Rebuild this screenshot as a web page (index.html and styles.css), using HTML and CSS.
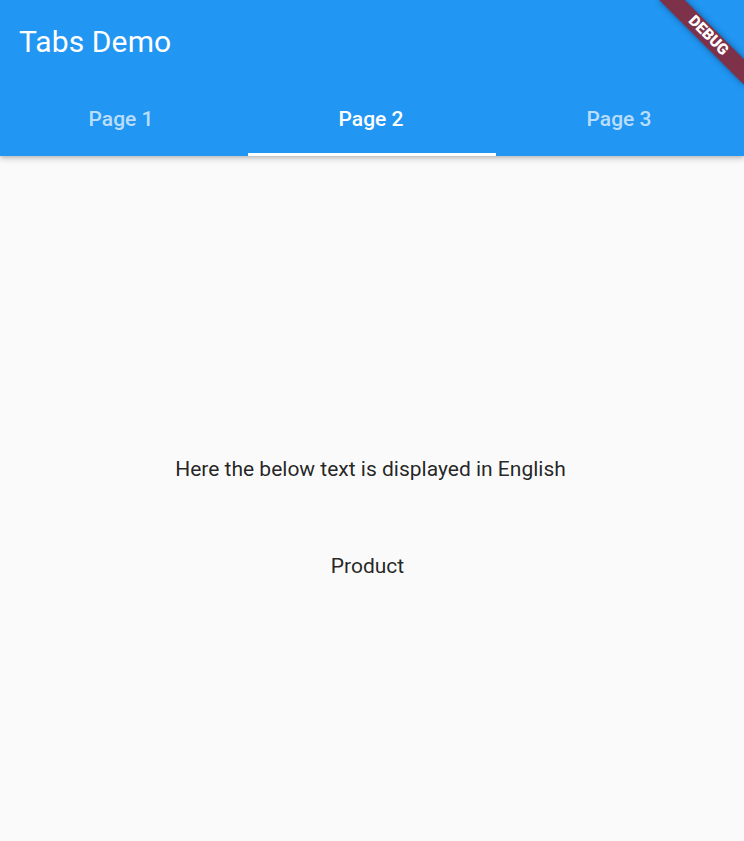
FILE: index.html
```html
<!DOCTYPE html>
<html>
<head>
<meta charset="utf-8">
<link rel="stylesheet" href="styles.css">
</head>
<body>
<div class="app">
  <header class="appbar">
    <div class="toolbar"><span class="title">Tabs Demo</span></div>
    <nav class="tabs">
      <div class="tab tab-first">Page 1</div>
      <div class="tab active">Page 2</div>
      <div class="tab">Page 3</div>
    </nav>
  </header>
  <main class="content">
    <p class="line line1">Here the below text is displayed in English</p>
    <p class="line line2">Product</p>
  </main>
  <div class="banner"><span>DEBUG</span></div>
</div>
</body>
</html>
```
FILE: styles.css
```css
* { box-sizing: border-box; }
html, body { margin: 0; padding: 0; }
body {
  width: 744px;
  height: 841px;
  overflow: hidden;
  background: #fafafa;
  font-family: Roboto, "Noto Sans", sans-serif;
}
.app {
  position: relative;
  width: 744px;
  height: 841px;
  display: flex;
  flex-direction: column;
}
.appbar {
  background: #2196f3;
  color: #fff;
  box-shadow: 0 3px 6px rgba(0,0,0,0.18), 0 1px 3px rgba(0,0,0,0.12);
  position: relative;
  z-index: 1;
}
.toolbar {
  height: 84px;
  display: flex;
  align-items: center;
  padding-left: 19px;
}
.title {
  font-size: 30px;
  font-weight: 400;
  line-height: 1;
  letter-spacing: 0.1px;
}
.tabs {
  height: 72px;
  display: grid;
  grid-template-columns: 1fr 1fr 1fr;
}
.tab {
  display: flex;
  align-items: center;
  justify-content: center;
  padding-right: 2px;
  font-size: 21px;
  font-weight: 500;
  color: rgba(255,255,255,0.7);
  border-bottom: 3px solid transparent;
}
.tab-first { padding-right: 6px; }
.tab.active {
  color: #fff;
  border-bottom-color: #fff;
}
.content {
  flex: 1;
  display: flex;
  flex-direction: column;
  align-items: center;
  padding-top: 301px;
}
.line {
  margin: 0;
  font-size: 21px;
  line-height: 25px;
  color: rgba(0,0,0,0.87);
}
.line1 { padding-right: 3px; }
.line2 { margin-top: 72px; padding-right: 9px; }
.banner {
  position: absolute;
  width: 120px;
  height: 18px;
  left: 648px;
  top: 27px;
  transform: rotate(45deg);
  background: #7e3249;
  box-shadow: 0 0 6px rgba(0,0,0,0.4);
  display: flex;
  align-items: center;
  justify-content: center;
  z-index: 2;
}
.banner span {
  color: #fff;
  font-size: 15.3px;
  font-weight: 900;
  line-height: 1;
}
```
